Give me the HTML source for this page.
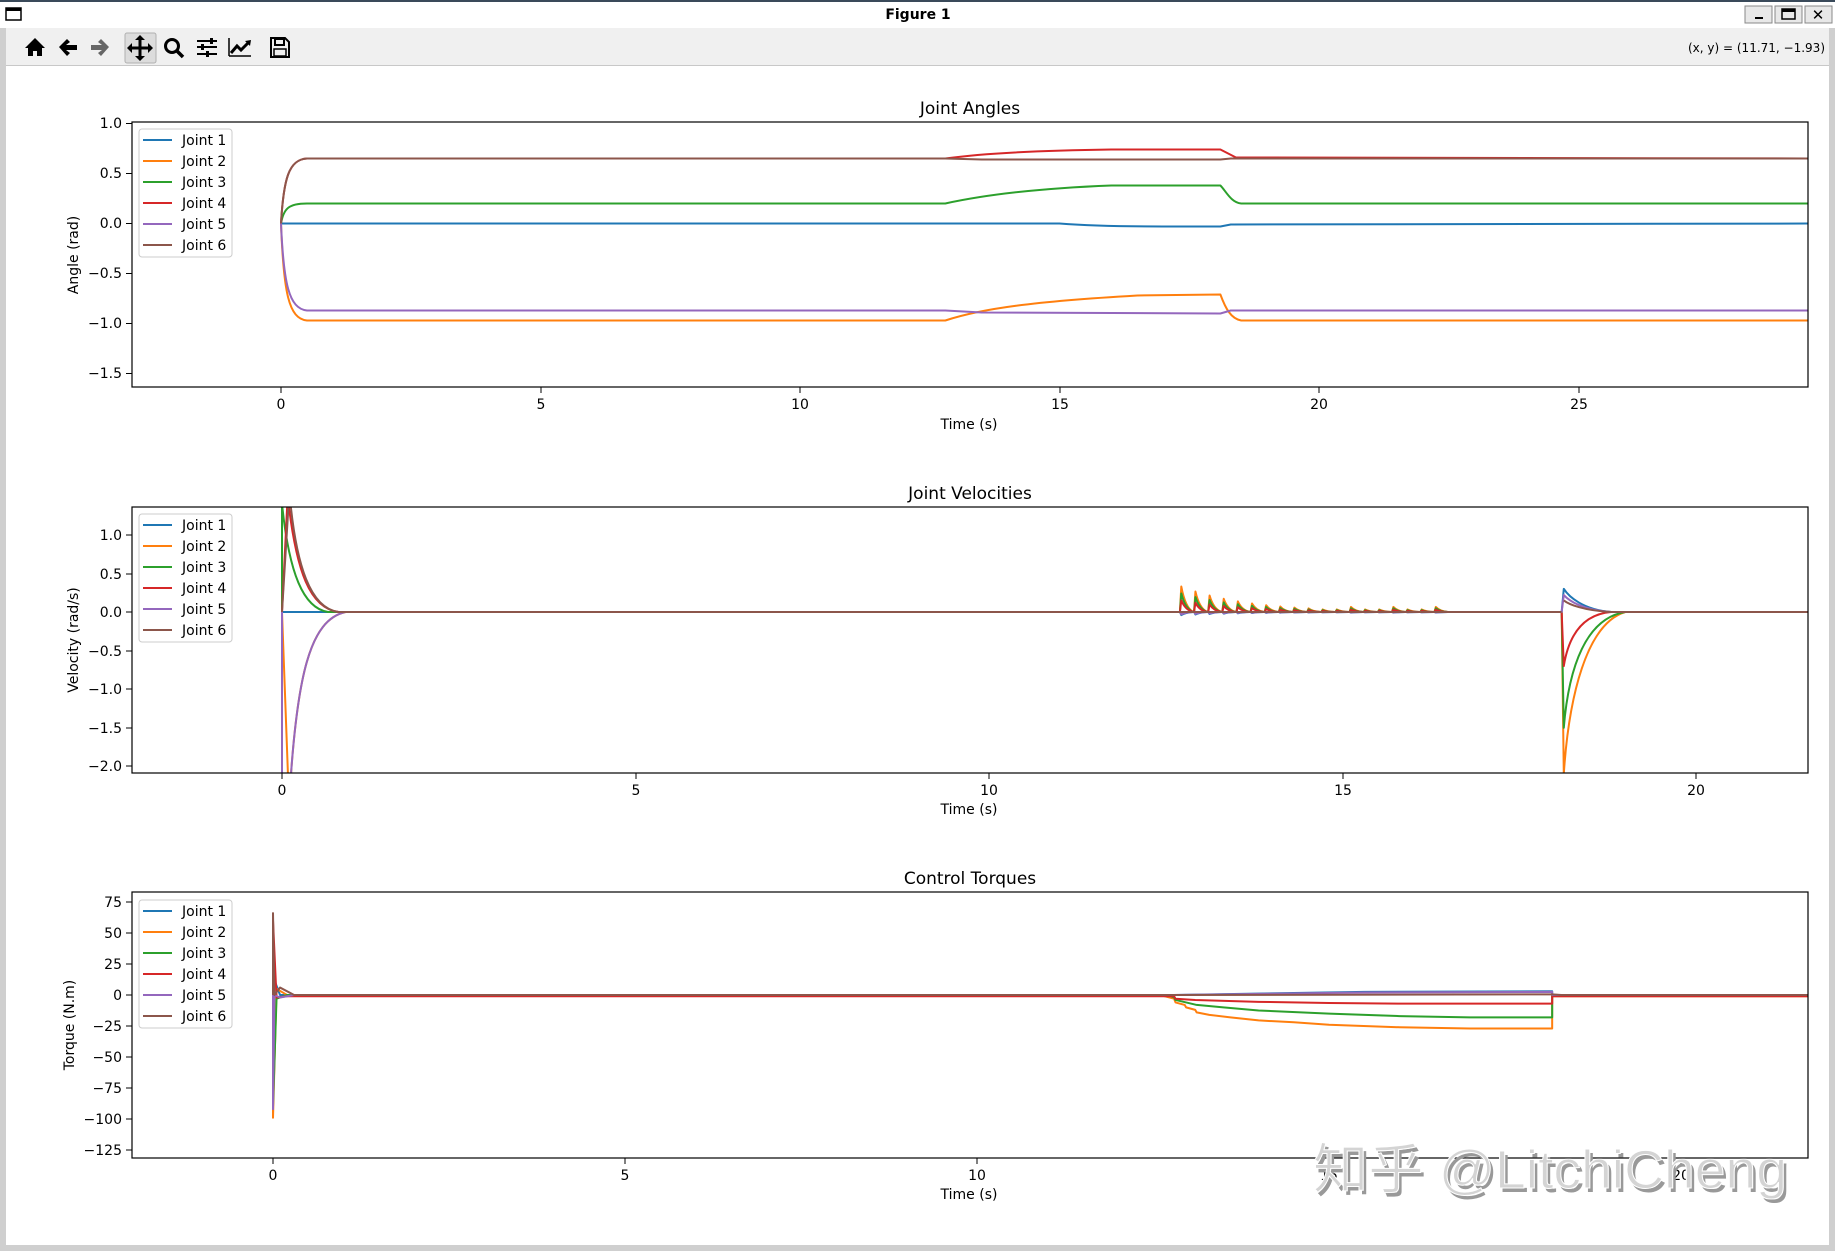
<!DOCTYPE html>
<html><head><meta charset="utf-8"><style>
html,body{margin:0;padding:0;width:1835px;height:1251px;overflow:hidden;background:#fff;font-family:"DejaVu Sans","Liberation Sans",sans-serif}
</style></head><body>
<svg width="1835" height="1251" viewBox="0 0 1835 1251" xmlns="http://www.w3.org/2000/svg" font-family="DejaVu Sans, Liberation Sans, sans-serif">
<defs>
<clipPath id="c1"><rect x="132" y="122" width="1676" height="265"/></clipPath>
<clipPath id="c2"><rect x="132" y="507" width="1676" height="266"/></clipPath>
<clipPath id="c3"><rect x="132" y="892" width="1676" height="266"/></clipPath>
</defs>
<!-- window chrome -->
<rect x="0" y="0" width="1835" height="1251" fill="#fff"/>
<rect x="0" y="0" width="1835" height="2" fill="#3a4a5a"/>
<rect x="0" y="2" width="1835" height="26" fill="#fff"/>
<rect x="6" y="8" width="15" height="12" fill="#fff" stroke="#000" stroke-width="1.5"/>
<rect x="6" y="8" width="15" height="3" fill="#000"/>
<text x="918" y="19" font-size="14" font-weight="bold" text-anchor="middle">Figure 1</text>
<g fill="#e8e8e8" stroke="#888"><rect x="1745" y="6" width="27" height="17"/><rect x="1775" y="6" width="27" height="17"/><rect x="1805" y="6" width="27" height="17"/></g>
<rect x="1755" y="17" width="8" height="2" fill="#000"/>
<rect x="1782" y="9" width="13" height="10" fill="none" stroke="#000" stroke-width="1.5"/>
<rect x="1782" y="9" width="13" height="3" fill="#000"/>
<text x="1818" y="20" font-size="15" font-weight="bold" text-anchor="middle">✕</text>
<rect x="0" y="28" width="1835" height="38" fill="#f0f0f0"/>
<rect x="0" y="65" width="1835" height="1" fill="#c8c8c8"/>
<rect x="0" y="28" width="6" height="1223" fill="#cfcfcf"/>
<rect x="1829" y="28" width="6" height="1223" fill="#cfcfcf"/>
<rect x="0" y="1245" width="1835" height="6" fill="#cfcfcf"/>
<!-- toolbar icons -->
<g fill="#000">
<path d="M25 48 L35 38 L45 48 L42 48 L42 56 L37 56 L37 51 L33 51 L33 56 L28 56 L28 48 Z"/>
<path d="M59 47 L67 39 L70 42 L66 45 L77 45 L77 50 L66 50 L70 53 L67 56 Z"/>
<path fill="#666" d="M109 47 L101 39 L98 42 L102 45 L91 45 L91 50 L102 50 L98 53 L101 56 Z"/>
</g>
<rect x="125" y="33" width="31" height="30" rx="2" fill="#dcdcdc" stroke="#b0b0b0"/>
<g stroke="#000" stroke-width="3" fill="none"><line x1="140" y1="37" x2="140" y2="59"/><line x1="129" y1="48" x2="151" y2="48"/></g>
<g fill="#000"><path d="M140 35 L135 40 L145 40Z M140 61 L135 56 L145 56Z M127 48 L132 43 L132 53Z M153 48 L148 43 L148 53Z"/></g>
<circle cx="172" cy="46" r="6.5" fill="none" stroke="#000" stroke-width="3"/>
<line x1="177" y1="51" x2="183" y2="57" stroke="#000" stroke-width="3.5"/>
<g stroke="#000" stroke-width="2"><line x1="197" y1="41" x2="217" y2="41"/><line x1="197" y1="47" x2="217" y2="47"/><line x1="197" y1="54" x2="217" y2="54"/></g>
<g fill="#000"><rect x="210" y="38" width="3" height="6"/><rect x="201" y="44" width="3" height="6"/><rect x="206" y="51" width="3" height="6"/></g>
<path d="M229 56 L251 56 M229 38 L229 56" stroke="#000" stroke-width="1.5" fill="none"/>
<path d="M231 53 L237 46 L241 50 L249 42" stroke="#000" stroke-width="3" fill="none"/>
<path d="M245 41 L251 40 L250 46Z" fill="#000"/>
<path d="M271 38 L285 38 L289 42 L289 57 L271 57 Z" fill="none" stroke="#000" stroke-width="2"/>
<rect x="275" y="39" width="9" height="6" fill="none" stroke="#000" stroke-width="2"/>
<rect x="274" y="49" width="12" height="7" fill="none" stroke="#000" stroke-width="1.5"/>
<text x="1825" y="52" font-size="12" text-anchor="end">(x, y) = (11.71, −1.93)</text>

<!-- ================= PLOT 1 ================= -->
<text x="970" y="114" font-size="17" text-anchor="middle">Joint Angles</text>
<g clip-path="url(#c1)" fill="none" stroke-width="2" stroke-linejoin="round">
<g transform="translate(281,223.5) scale(51.9,-100)">
<path vector-effect="non-scaling-stroke" stroke="#1f77b4" d="M0,0 L15,0 C15.5,-0.02 16,-0.03 17,-0.03 L18.1,-0.03 L18.3,-0.01 L30,0"/>
<path vector-effect="non-scaling-stroke" stroke="#ff7f0e" d="M0,0 C0.05,-0.7 0.15,-0.95 0.5,-0.97 L12.8,-0.97 C13.5,-0.85 14.5,-0.78 16.5,-0.72 L18.1,-0.71 C18.2,-0.85 18.3,-0.95 18.5,-0.97 L30,-0.97"/>
<path vector-effect="non-scaling-stroke" stroke="#2ca02c" d="M0,0 C0.05,0.15 0.15,0.2 0.5,0.2 L12.8,0.2 C13.5,0.28 14.5,0.35 16,0.38 L18.1,0.38 C18.2,0.33 18.3,0.21 18.5,0.2 L30,0.2"/>
<path vector-effect="non-scaling-stroke" stroke="#d62728" d="M0,0 C0.05,0.45 0.15,0.64 0.5,0.65 L12.8,0.65 C13.5,0.7 14.5,0.73 16,0.74 L18.1,0.74 L18.4,0.66 L30,0.65"/>
<path vector-effect="non-scaling-stroke" stroke="#9467bd" d="M0,0 C0.05,-0.6 0.15,-0.85 0.5,-0.87 L12.8,-0.87 L13.5,-0.89 L18.1,-0.9 L18.3,-0.87 L30,-0.87"/>
<path vector-effect="non-scaling-stroke" stroke="#8c564b" d="M0,0 C0.05,0.45 0.15,0.64 0.5,0.65 L12.8,0.65 L13.5,0.64 L18.1,0.64 L18.3,0.65 L30,0.65"/>
</g></g>
<rect x="132" y="122" width="1676" height="265" fill="none" stroke="#000" stroke-width="1.2"/>
<g stroke="#000" stroke-width="1"><line x1="126" y1="123.5" x2="132" y2="123.5"/><line x1="126" y1="173.5" x2="132" y2="173.5"/><line x1="126" y1="223.5" x2="132" y2="223.5"/><line x1="126" y1="273.5" x2="132" y2="273.5"/><line x1="126" y1="323.5" x2="132" y2="323.5"/><line x1="126" y1="373.5" x2="132" y2="373.5"/>
<line x1="281" y1="387" x2="281" y2="393"/><line x1="541" y1="387" x2="541" y2="393"/><line x1="800" y1="387" x2="800" y2="393"/><line x1="1060" y1="387" x2="1060" y2="393"/><line x1="1319" y1="387" x2="1319" y2="393"/><line x1="1579" y1="387" x2="1579" y2="393"/></g>
<g font-size="14" text-anchor="end"><text x="122" y="128">1.0</text><text x="122" y="178">0.5</text><text x="122" y="228">0.0</text><text x="122" y="278">−0.5</text><text x="122" y="328">−1.0</text><text x="122" y="378">−1.5</text></g>
<g font-size="14" text-anchor="middle"><text x="281" y="409">0</text><text x="541" y="409">5</text><text x="800" y="409">10</text><text x="1060" y="409">15</text><text x="1319" y="409">20</text><text x="1579" y="409">25</text>
<text x="969" y="429">Time (s)</text>
<text transform="translate(78,255) rotate(-90)">Angle (rad)</text></g>

<!-- ================= PLOT 2 ================= -->
<text x="970" y="499" font-size="17" text-anchor="middle">Joint Velocities</text>
<g clip-path="url(#c2)" fill="none" stroke-width="2" stroke-linejoin="round">
<g transform="translate(282,612) scale(70.7,-77.2)" id="p2">
<path vector-effect="non-scaling-stroke" stroke="#1f77b4" d="M0,0 L18.1,0 L18.13,0.3 C18.2,0.2 18.4,0.03 18.8,0 L23,0"/>
<path vector-effect="non-scaling-stroke" stroke="#ff7f0e" d="M0,0 L0.1,-2.5 C0.2,-0.8 0.4,-0.1 0.9,0 L18.1,0 L18.13,-2.1 C18.2,-1.1 18.45,-0.15 19,0 L23,0"/>
<path vector-effect="non-scaling-stroke" stroke="#2ca02c" d="M0,0 L0,1.4 C0.1,0.5 0.3,0.05 0.65,0 L18.1,0 L18.13,-1.5 C18.2,-0.7 18.45,-0.08 19,0 L23,0"/>
<path vector-effect="non-scaling-stroke" stroke="#d62728" d="M0,0 L0.08,1.5 C0.2,0.5 0.4,0.05 0.8,0 L18.1,0 L18.13,-0.7 C18.2,-0.3 18.4,-0.03 18.8,0 L23,0"/>
<path vector-effect="non-scaling-stroke" stroke="#9467bd" d="M0,0 L0,-2.5 L0.02,-2.5 M0.1,-2.5 C0.2,-0.8 0.4,-0.1 0.9,0 L18.1,0 L18.13,0.22 C18.2,0.15 18.4,0.02 18.8,0 L23,0"/>
<path vector-effect="non-scaling-stroke" stroke="#8c564b" d="M0,0 L0.1,1.5 L0.11,1.5 C0.2,0.6 0.4,0.05 0.8,0 L18.1,0 M18.13,0.15 C18.2,0.1 18.4,0.02 18.8,0 L23,0"/>
</g></g>
<rect x="132" y="507" width="1676" height="266" fill="none" stroke="#000" stroke-width="1.2"/>
<g stroke="#000" stroke-width="1"><line x1="126" y1="535" x2="132" y2="535"/><line x1="126" y1="574" x2="132" y2="574"/><line x1="126" y1="612" x2="132" y2="612"/><line x1="126" y1="651" x2="132" y2="651"/><line x1="126" y1="689" x2="132" y2="689"/><line x1="126" y1="728" x2="132" y2="728"/><line x1="126" y1="766" x2="132" y2="766"/>
<line x1="282" y1="773" x2="282" y2="779"/><line x1="636" y1="773" x2="636" y2="779"/><line x1="989" y1="773" x2="989" y2="779"/><line x1="1343" y1="773" x2="1343" y2="779"/><line x1="1696" y1="773" x2="1696" y2="779"/></g>
<g font-size="14" text-anchor="end"><text x="122" y="540">1.0</text><text x="122" y="579">0.5</text><text x="122" y="617">0.0</text><text x="122" y="656">−0.5</text><text x="122" y="694">−1.0</text><text x="122" y="733">−1.5</text><text x="122" y="771">−2.0</text></g>
<g font-size="14" text-anchor="middle"><text x="282" y="795">0</text><text x="636" y="795">5</text><text x="989" y="795">10</text><text x="1343" y="795">15</text><text x="1696" y="795">20</text>
<text x="969" y="814">Time (s)</text>
<text transform="translate(78,640) rotate(-90)">Velocity (rad/s)</text></g>

<!-- ================= PLOT 3 ================= -->
<text x="970" y="884" font-size="17" text-anchor="middle">Control Torques</text>
<g clip-path="url(#c3)" fill="none" stroke-width="2" stroke-linejoin="round">
<g transform="translate(273,995) scale(70.4,-1.24)">
<path vector-effect="non-scaling-stroke" stroke="#1f77b4" d="M0,0 L0,15 L0.1,0 L12.8,0 L15.5,2.5 L18.17,3 L18.17,0 L30,0"/>
<path vector-effect="non-scaling-stroke" stroke="#ff7f0e" d="M0,0 L0,-99 L0.05,5 L0.2,0 L12.6,0 L12.8,-3 L12.82,-6 L12.95,-8 L12.97,-10 L13.1,-12 L13.12,-14 L13.3,-16 L13.6,-18 L14,-20.5 L14.5,-22 L15,-24 L16,-26 L17,-27 L18.17,-27 L18.17,-1 L30,-1"/>
<path vector-effect="non-scaling-stroke" stroke="#2ca02c" d="M0,0 L0,-90 L0.05,-3 L0.2,0 L12.7,0 L12.8,-2 L12.82,-4 L12.97,-6 L13.12,-8 L13.5,-10 L14,-12.5 L15,-15 L16,-17 L17,-18 L18.17,-18 L18.17,0 L30,0"/>
<path vector-effect="non-scaling-stroke" stroke="#d62728" d="M0,0 L0,60 L0.05,-2 L0.2,-1 L12.8,-1 L12.82,-3 L13.1,-4 L14,-5.5 L15,-6.5 L16,-7 L18.17,-7 L18.17,-1 L30,-1"/>
<path vector-effect="non-scaling-stroke" stroke="#9467bd" d="M0,0 L0,-92 L0.02,0 L0.1,-2 L0.3,0 L12.8,0 L15.5,2 L18.17,2.5 L18.17,0 L30,0"/>
<path vector-effect="non-scaling-stroke" stroke="#8c564b" d="M0,0 L0,66 L0.02,0 L0.1,6 L0.3,0 L12.8,0 L18.17,0.5 L18.3,0 L30,0"/>
</g></g>
<rect x="132" y="892" width="1676" height="266" fill="none" stroke="#000" stroke-width="1.2"/>
<g stroke="#000" stroke-width="1"><line x1="126" y1="902" x2="132" y2="902"/><line x1="126" y1="933" x2="132" y2="933"/><line x1="126" y1="964" x2="132" y2="964"/><line x1="126" y1="995" x2="132" y2="995"/><line x1="126" y1="1026" x2="132" y2="1026"/><line x1="126" y1="1057" x2="132" y2="1057"/><line x1="126" y1="1088" x2="132" y2="1088"/><line x1="126" y1="1119" x2="132" y2="1119"/><line x1="126" y1="1150" x2="132" y2="1150"/>
<line x1="273" y1="1158" x2="273" y2="1164"/><line x1="625" y1="1158" x2="625" y2="1164"/><line x1="977" y1="1158" x2="977" y2="1164"/><line x1="1329" y1="1158" x2="1329" y2="1164"/><line x1="1681" y1="1158" x2="1681" y2="1164"/></g>
<g font-size="14" text-anchor="end"><text x="122" y="907">75</text><text x="122" y="938">50</text><text x="122" y="969">25</text><text x="122" y="1000">0</text><text x="122" y="1031">−25</text><text x="122" y="1062">−50</text><text x="122" y="1093">−75</text><text x="122" y="1124">−100</text><text x="122" y="1155">−125</text></g>
<g font-size="14" text-anchor="middle"><text x="273" y="1180">0</text><text x="625" y="1180">5</text><text x="977" y="1180">10</text><text x="1329" y="1180">15</text><text x="1681" y="1180">20</text>
<text x="969" y="1199">Time (s)</text>
<text transform="translate(74,1025) rotate(-90)">Torque (N.m)</text></g>

<!-- legends -->
<g id="leg1" transform="translate(0,0)">
<rect x="139" y="129" width="93" height="128" rx="3" fill="#fff" fill-opacity="0.85" stroke="#ccc"/>
<g stroke-width="2"><line x1="143" y1="140" x2="172" y2="140" stroke="#1f77b4"/><line x1="143" y1="161" x2="172" y2="161" stroke="#ff7f0e"/><line x1="143" y1="182" x2="172" y2="182" stroke="#2ca02c"/><line x1="143" y1="203" x2="172" y2="203" stroke="#d62728"/><line x1="143" y1="224" x2="172" y2="224" stroke="#9467bd"/><line x1="143" y1="245" x2="172" y2="245" stroke="#8c564b"/></g>
<g font-size="14"><text x="182" y="145">Joint 1</text><text x="182" y="166">Joint 2</text><text x="182" y="187">Joint 3</text><text x="182" y="208">Joint 4</text><text x="182" y="229">Joint 5</text><text x="182" y="250">Joint 6</text></g>
</g>
<g transform="translate(0,385)">
<rect x="139" y="129" width="93" height="128" rx="3" fill="#fff" fill-opacity="0.85" stroke="#ccc"/>
<g stroke-width="2"><line x1="143" y1="140" x2="172" y2="140" stroke="#1f77b4"/><line x1="143" y1="161" x2="172" y2="161" stroke="#ff7f0e"/><line x1="143" y1="182" x2="172" y2="182" stroke="#2ca02c"/><line x1="143" y1="203" x2="172" y2="203" stroke="#d62728"/><line x1="143" y1="224" x2="172" y2="224" stroke="#9467bd"/><line x1="143" y1="245" x2="172" y2="245" stroke="#8c564b"/></g>
<g font-size="14"><text x="182" y="145">Joint 1</text><text x="182" y="166">Joint 2</text><text x="182" y="187">Joint 3</text><text x="182" y="208">Joint 4</text><text x="182" y="229">Joint 5</text><text x="182" y="250">Joint 6</text></g>
</g>
<g transform="translate(0,771)">
<rect x="139" y="129" width="93" height="128" rx="3" fill="#fff" fill-opacity="0.85" stroke="#ccc"/>
<g stroke-width="2"><line x1="143" y1="140" x2="172" y2="140" stroke="#1f77b4"/><line x1="143" y1="161" x2="172" y2="161" stroke="#ff7f0e"/><line x1="143" y1="182" x2="172" y2="182" stroke="#2ca02c"/><line x1="143" y1="203" x2="172" y2="203" stroke="#d62728"/><line x1="143" y1="224" x2="172" y2="224" stroke="#9467bd"/><line x1="143" y1="245" x2="172" y2="245" stroke="#8c564b"/></g>
<g font-size="14"><text x="182" y="145">Joint 1</text><text x="182" y="166">Joint 2</text><text x="182" y="187">Joint 3</text><text x="182" y="208">Joint 4</text><text x="182" y="229">Joint 5</text><text x="182" y="250">Joint 6</text></g>
</g>

<!-- watermark -->
<text x="1316" y="1192" font-size="54" fill="#999" font-family="Liberation Sans, Noto Sans CJK SC, sans-serif" textLength="474" lengthAdjust="spacingAndGlyphs">知乎 @LitchiCheng</text>
<text x="1313" y="1188" font-size="54" fill="#d4d4d4" stroke="#fff" stroke-width="1" font-family="Liberation Sans, Noto Sans CJK SC, sans-serif" textLength="474" lengthAdjust="spacingAndGlyphs">知乎 @LitchiCheng</text>
</svg>
<script>
(function(){
var g=document.getElementById('p2');var NS='http://www.w3.org/2000/svg';
var sets=[['#ff7f0e',0.33],['#2ca02c',0.24],['#d62728',0.15],['#1f77b4',-0.04],['#9467bd',-0.03]];
sets.forEach(function(s){
 var d='M12.5,0';var t=12.7;
 for(var k=0;k<19;k++){var a=s[1]*Math.exp(-k*0.22);if(k>9)a=s[1]*0.2*(k%3==0?1:0.5);
  d+=' L'+t.toFixed(3)+',0 L'+(t+0.02).toFixed(3)+','+a.toFixed(3)+' C'+(t+0.06).toFixed(3)+','+(a*0.4).toFixed(3)+' '+(t+0.12).toFixed(3)+','+(a*0.1).toFixed(3)+' '+(t+0.19).toFixed(3)+',0';
  t+=0.2;}
 d+=' L17,0';
 var p=document.createElementNS(NS,'path');p.setAttribute('d',d);p.setAttribute('stroke',s[0]);p.setAttribute('vector-effect','non-scaling-stroke');p.setAttribute('fill','none');
 g.insertBefore(p,g.lastElementChild);
});
})();
</script>
</body></html>
